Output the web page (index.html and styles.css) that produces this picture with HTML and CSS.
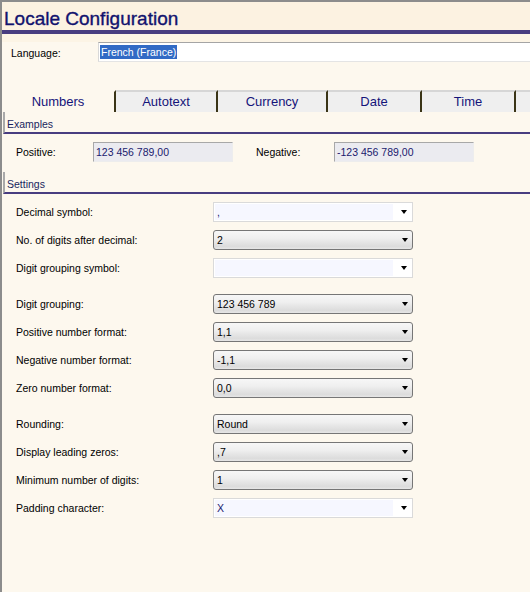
FILE: index.html
```html
<!DOCTYPE html>
<html>
<head>
<meta charset="utf-8">
<title>Locale Configuration</title>
<link rel="stylesheet" href="styles.css">
</head>
<body>
<div class="window">
  <h1 class="title">Locale Configuration</h1>
  <div class="lang-row">
    <span class="lang-label">Language:</span>
    <div class="lang-input"><span class="sel">French (France)</span></div>
  </div>
  <div class="tabs">
    <div class="tab active t-numbers">Numbers</div>
    <div class="tab t-autotext">Autotext</div>
    <div class="tab t-currency">Currency</div>
    <div class="tab t-date">Date</div>
    <div class="tab t-time">Time</div>
    <div class="tab tab-rest"></div>
  </div>
  <div class="section-head">Examples</div>
  <div class="examples">
    <span class="ex-label">Positive:</span>
    <div class="ex-field">123 456 789,00</div>
    <span class="ex-label neg">Negative:</span>
    <div class="ex-field">-123 456 789,00</div>
  </div>
  <div class="section-head">Settings</div>
  <div class="settings">
    <div class="group">
      <div class="row"><span class="label">Decimal symbol:</span><div class="combo edit"><span class="val">,</span><span class="arrow"></span></div></div>
      <div class="row"><span class="label">No. of digits after decimal:</span><div class="combo drop"><span class="val">2</span><span class="arrow"></span></div></div>
      <div class="row"><span class="label">Digit grouping symbol:</span><div class="combo edit"><span class="val"></span><span class="arrow"></span></div></div>
    </div>
    <div class="group">
      <div class="row"><span class="label">Digit grouping:</span><div class="combo drop"><span class="val">123 456 789</span><span class="arrow"></span></div></div>
      <div class="row"><span class="label">Positive number format:</span><div class="combo drop"><span class="val">1,1</span><span class="arrow"></span></div></div>
      <div class="row"><span class="label">Negative number format:</span><div class="combo drop"><span class="val">-1,1</span><span class="arrow"></span></div></div>
      <div class="row"><span class="label">Zero number format:</span><div class="combo drop"><span class="val">0,0</span><span class="arrow"></span></div></div>
    </div>
    <div class="group">
      <div class="row"><span class="label">Rounding:</span><div class="combo drop"><span class="val">Round</span><span class="arrow"></span></div></div>
      <div class="row"><span class="label">Display leading zeros:</span><div class="combo drop"><span class="val">,7</span><span class="arrow"></span></div></div>
      <div class="row"><span class="label">Minimum number of digits:</span><div class="combo drop"><span class="val">1</span><span class="arrow"></span></div></div>
      <div class="row"><span class="label">Padding character:</span><div class="combo edit"><span class="val">X</span><span class="arrow"></span></div></div>
    </div>
  </div>
</div>
</body>
</html>
```
FILE: styles.css
```css
* { box-sizing: border-box; }
html, body { margin: 0; padding: 0; }
body {
  width: 530px;
  min-height: 592px;
  background: #fdf8ee;
  font-family: "Liberation Sans", Arial, sans-serif;
  font-size: 10.5px;
  color: #000;
  overflow: hidden;
}
.window {
  min-height: 592px;
  border-top: 2px solid #8c8c8c;
  border-left: 2px solid #8c8c8c;
  background: #fdf8ee;
}
.title {
  margin: 0;
  padding: 6px 0 0 2px;
  height: 32px;
  line-height: 22px;
  font-size: 19px;
  font-weight: normal;
  color: #12126e;
  -webkit-text-stroke: 0.35px #12126e;
  background: #fcf2e1;
  border-bottom: 4px solid #483d80;
}
.lang-row {
  display: flex;
  align-items: center;
  padding: 8px 0 0 9px;
  margin-bottom: 28px;
  background: linear-gradient(#fcf4e5 0, #fcf4e5 8px, transparent 8px);
}
.lang-label { width: 87px; padding-top: 2px; }
.lang-input {
  flex: 1;
  height: 20px;
  display: flex;
  align-items: center;
  background: #fff;
  border-top: 1px solid #a5a5a5;
  border-left: 1px solid #d8d8d8;
  border-bottom: 1px solid #e4e4e4;
  padding-left: 1px;
}
.sel {
  background: #316ac5;
  color: #fff;
  line-height: 14px;
  padding: 0 1px;
}
.tabs {
  display: flex;
  height: 22px;
}
.tab {
  height: 22px;
  border-top: 2px solid #d6d6d6;
  border-right: 2px solid #3a3416;
  background: #efefef;
  color: #14147a;
  font-size: 13px;
  line-height: 20px;
  text-align: center;
}
.tab.active {
  background: transparent;
  border-top-color: transparent;
}
.t-numbers { width: 114px; }
.t-autotext { width: 102px; }
.t-currency { width: 110px; }
.t-date { width: 94px; }
.t-time { width: 94px; }
.tab-rest { flex: 1; border-right: none; }
.section-head {
  margin-left: 1px;
  height: 22px;
  padding: 4px 0 0 2px;
  line-height: 16px;
  color: #1a1f5e;
  border-left: 2px solid #a9a9a9;
  border-bottom: 2px solid #483d80;
}
.examples {
  display: flex;
  align-items: center;
  padding: 8px 0 10px 14px;
}
.ex-label { width: 77px; }
.ex-label.neg { width: 78px; margin-left: 23px; }
.ex-field {
  width: 140px;
  height: 20px;
  line-height: 18px;
  padding-left: 2px;
  background: #ebebf0;
  color: #1a1a6e;
  border: 1px solid;
  border-color: #a8a8a8 #ededed #ededed #a8a8a8;
}
.settings {
  display: flex;
  flex-direction: column;
  gap: 16px;
  padding: 8px 0 0 14px;
}
.group {
  display: flex;
  flex-direction: column;
  gap: 8px;
}
.row {
  display: flex;
  align-items: center;
  height: 20px;
}
.label { width: 197px; }
.combo {
  width: 200px;
  height: 20px;
  display: flex;
  align-items: center;
}
.combo .val { flex: 1; }
.combo.drop {
  border: 1px solid #767676;
  border-radius: 3px;
  padding-left: 3px;
  background: linear-gradient(#f7f7f7 0%, #efefef 40%, #dcdcdc 85%, #e6e6e6 100%);
}
.combo.edit {
  border: 1px solid #dadada;
  background: #fff;
  padding: 1px;
}
.combo.edit .val {
  flex: 0 0 178px;
  height: 100%;
  line-height: 16px;
  padding-left: 2px;
  background: #f6f7ff;
  color: #1a1a6e;
}
.combo.edit .arrow { margin-left: auto; }
.arrow {
  width: 0;
  height: 0;
  border-left: 3.5px solid transparent;
  border-right: 3.5px solid transparent;
  border-top: 4px solid #000;
  margin-right: 4px;
}
```
